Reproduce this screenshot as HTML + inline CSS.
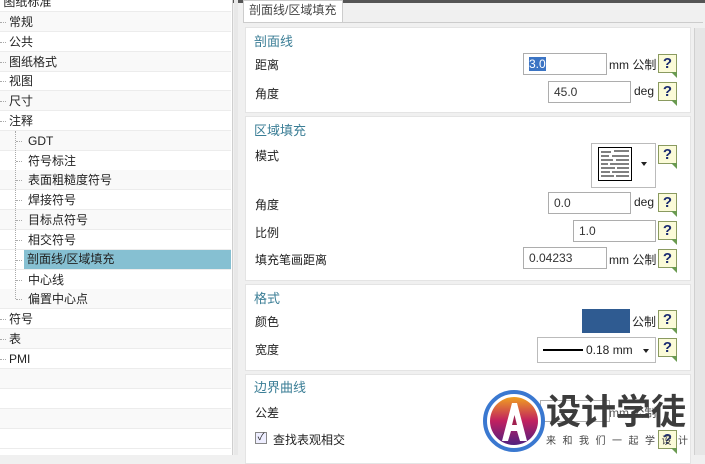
<!DOCTYPE html><html><head><meta charset="utf-8"><style>
*{margin:0;padding:0;box-sizing:border-box}
body{width:705px;height:455px;overflow:hidden;background:#f0f0f0;font-family:"Liberation Sans","Noto Sans CJK SC",sans-serif;font-size:12px;color:#222;position:relative}
.a{position:absolute}
#left{left:0;top:0;width:233px;height:455px;background:#fff;border-right:1px solid #cfcfcf}
.row{position:absolute;left:0;width:231px;height:20px;line-height:20px;border-bottom:1px solid #ececec;white-space:nowrap}
.row:nth-child(even){background:#f9f9f9}
.sel{background:#86c0d2!important}
.dot{position:absolute;top:10px;border-top:1px dotted #aaa;width:6px}
.box{position:absolute;left:245px;width:446px;background:#fff;border:1px solid #e4e4e4}
.h{position:absolute;color:#3b7e96;font-size:13px}
.lb{position:absolute;font-size:12px}
.in{position:absolute;height:22px;border:1px solid #adadad;background:#fff;line-height:20px;padding-left:5px;font-size:12px;color:#333}
.q{position:absolute;width:19px;height:19px;border:1px solid #8a9a60;background:#fbfbd8;font:bold 15px/17px "Liberation Sans",sans-serif;text-align:center;color:#1a2a70}
.q:after{content:"";position:absolute;right:-1px;bottom:-6px;border-left:6px solid transparent;border-top:6px solid #6a9a50}
</style></head><body>
<div class="a" style="left:0;top:0;width:705px;height:3px;background:#555"></div>
<div id="left" class="a">
<div class="row" style="top:-8px">&nbsp;图纸标准</div>
<div class="row" style="top:12px"><span class="dot" style="left:0"></span><span style="padding-left:9px">常规</span></div>
<div class="row" style="top:32px"><span class="dot" style="left:0"></span><span style="padding-left:9px">公共</span></div>
<div class="row" style="top:52px"><span class="dot" style="left:0"></span><span style="padding-left:9px">图纸格式</span></div>
<div class="row" style="top:71px"><span class="dot" style="left:0"></span><span style="padding-left:9px">视图</span></div>
<div class="row" style="top:91px"><span class="dot" style="left:0"></span><span style="padding-left:9px">尺寸</span></div>
<div class="row" style="top:111px"><span class="dot" style="left:0"></span><span style="padding-left:9px">注释</span></div>
<div class="row" style="top:131px"><span class="dot" style="left:16px"></span><span style="padding-left:28px">GDT</span></div>
<div class="row" style="top:151px"><span class="dot" style="left:16px"></span><span style="padding-left:28px">符号标注</span></div>
<div class="row" style="top:170px"><span class="dot" style="left:16px"></span><span style="padding-left:28px">表面粗糙度符号</span></div>
<div class="row" style="top:190px"><span class="dot" style="left:16px"></span><span style="padding-left:28px">焊接符号</span></div>
<div class="row" style="top:210px"><span class="dot" style="left:16px"></span><span style="padding-left:28px">目标点符号</span></div>
<div class="row" style="top:230px"><span class="dot" style="left:16px"></span><span style="padding-left:28px">相交符号</span></div>
<div class="row" style="top:250px;background:#fff"><span class="dot" style="left:16px"></span><div class="sel" style="position:absolute;left:24px;top:0;width:207px;height:19px;padding-left:3px;line-height:19px">剖面线/区域填充</div></div>
<div class="row" style="top:270px"><span class="dot" style="left:16px"></span><span style="padding-left:28px">中心线</span></div>
<div class="row" style="top:289px"><span class="dot" style="left:16px"></span><span style="padding-left:28px">偏置中心点</span></div>
<div class="row" style="top:309px"><span class="dot" style="left:0"></span><span style="padding-left:9px">符号</span></div>
<div class="row" style="top:329px"><span class="dot" style="left:0"></span><span style="padding-left:9px">表</span></div>
<div class="row" style="top:349px"><span class="dot" style="left:0"></span><span style="padding-left:9px">PMI</span></div>
<div class="row" style="top:369px"></div><div class="row" style="top:389px"></div><div class="row" style="top:409px"></div><div class="row" style="top:429px"></div>
<div class="a" style="left:15px;top:131px;height:168px;border-left:1px dotted #aaa"></div>
</div>
<div class="a" style="left:234px;top:0;width:4px;height:455px;background:#e8e8e8"></div>
<div class="a" style="left:243px;top:0;width:100px;height:23px;background:#fff;border:1px solid #ccc;border-bottom:none;padding:0 0 0 5px;color:#444">剖面线/区域填充</div>
<div class="a" style="left:243px;top:22px;width:460px;height:1px;background:#ccc"></div>
<div class="a" style="left:694px;top:28px;width:11px;height:427px;background:#e6e6e6;border-left:1px solid #d0d0d0"></div>

<div class="box" style="top:27px;height:86px"></div>
<div class="h" style="left:254px;top:31px">剖面线</div>
<div class="lb" style="left:255px;top:56px">距离</div>
<div class="in" style="left:523px;top:53px;width:84px"><span style="background:#3b74c4;color:#fff">3.0</span></div>
<div class="lb" style="left:609px;top:56px">mm 公制</div>
<div class="q" style="left:658px;top:54px">?</div>
<div class="lb" style="left:255px;top:85px">角度</div>
<div class="in" style="left:548px;top:81px;width:83px">45.0</div>
<div class="lb" style="left:634px;top:84px">deg</div>
<div class="q" style="left:658px;top:82px">?</div>

<div class="box" style="top:116px;height:165px"></div>
<div class="h" style="left:254px;top:120px">区域填充</div>
<div class="lb" style="left:255px;top:147px">模式</div>
<div class="a" style="left:591px;top:143px;width:65px;height:45px;background:#fff;border:1px solid #bbb"></div>
<svg class="a" style="left:598px;top:147px" width="35" height="35"><rect x="0.5" y="0.5" width="33" height="33" fill="#fff" stroke="#000"/><g stroke="#000" stroke-width="1"><path d="M3 5h10M16 4h15M3 9h8M14 9h17M3 13h12M18 13h13M3 17h7M12 17h19M3 21h14M19 21h12M3 25h9M14 25h17M3 29h13M18 29h13"/></g></svg>
<div class="a" style="left:641px;top:162px;border-left:3px solid transparent;border-right:3px solid transparent;border-top:4px solid #222"></div>
<div class="q" style="left:658px;top:145px">?</div>
<div class="lb" style="left:255px;top:196px">角度</div>
<div class="in" style="left:548px;top:192px;width:83px">0.0</div>
<div class="lb" style="left:634px;top:195px">deg</div>
<div class="q" style="left:658px;top:193px">?</div>
<div class="lb" style="left:255px;top:224px">比例</div>
<div class="in" style="left:573px;top:220px;width:83px">1.0</div>
<div class="q" style="left:658px;top:221px">?</div>
<div class="lb" style="left:255px;top:251px">填充笔画距离</div>
<div class="in" style="left:523px;top:247px;width:84px">0.04233</div>
<div class="lb" style="left:609px;top:251px">mm 公制</div>
<div class="q" style="left:658px;top:249px">?</div>

<div class="box" style="top:284px;height:87px"></div>
<div class="h" style="left:254px;top:288px">格式</div>
<div class="lb" style="left:255px;top:313px">颜色</div>
<div class="a" style="left:582px;top:309px;width:48px;height:24px;background:#2f5b91"></div>
<div class="lb" style="left:632px;top:313px">公制</div>
<div class="q" style="left:658px;top:310px">?</div>
<div class="lb" style="left:255px;top:341px">宽度</div>
<div class="a" style="left:537px;top:337px;width:119px;height:26px;background:#fff;border:1px solid #bbb"></div>
<div class="a" style="left:543px;top:349px;width:40px;height:2px;background:#000"></div>
<div class="lb" style="left:586px;top:343px">0.18 mm</div>
<div class="a" style="left:643px;top:349px;border-left:3px solid transparent;border-right:3px solid transparent;border-top:4px solid #222"></div>
<div class="q" style="left:658px;top:338px">?</div>

<div class="box" style="top:374px;height:90px"></div>
<div class="h" style="left:254px;top:377px">边界曲线</div>
<div class="lb" style="left:255px;top:404px">公差</div>
<div class="in" style="left:540px;top:400px;width:70px"></div>
<div class="lb" style="left:609px;top:404px;color:#555">mm 公制</div>
<div class="a" style="left:255px;top:432px;width:12px;height:12px;border:1px solid #888;background:#eef;font-size:10px;line-height:10px;text-align:center">✓</div>
<div class="lb" style="left:273px;top:431px">查找表观相交</div>
<div class="q" style="left:658px;top:430px">?</div>

<svg class="a" style="left:482px;top:389px" width="64" height="64"><defs><linearGradient id="g" x1="0" y1="0" x2="0" y2="1"><stop offset="0" stop-color="#f0a020"/><stop offset=".5" stop-color="#c02060"/><stop offset="1" stop-color="#502080"/></linearGradient></defs><circle cx="32" cy="32" r="29" fill="#fff" stroke="#3a78d0" stroke-width="4"/><circle cx="32" cy="32" r="24" fill="url(#g)"/><path d="M20 52L30 14h5L45 52h-7l-3-10h-6l-3 10z" fill="#fff"/><path d="M30 36h5l-2.5-10z" fill="#a02050"/></svg>
<div class="a" style="left:546px;top:390px;font:bold 35px/40px 'Noto Sans CJK SC',sans-serif;color:#3c3c3c;white-space:nowrap">设计学徒</div>
<div class="a" style="left:546px;top:436px;font-size:10px;line-height:12px;color:#444;letter-spacing:6.5px;white-space:nowrap">来和我们一起学设计</div>
</body></html>
